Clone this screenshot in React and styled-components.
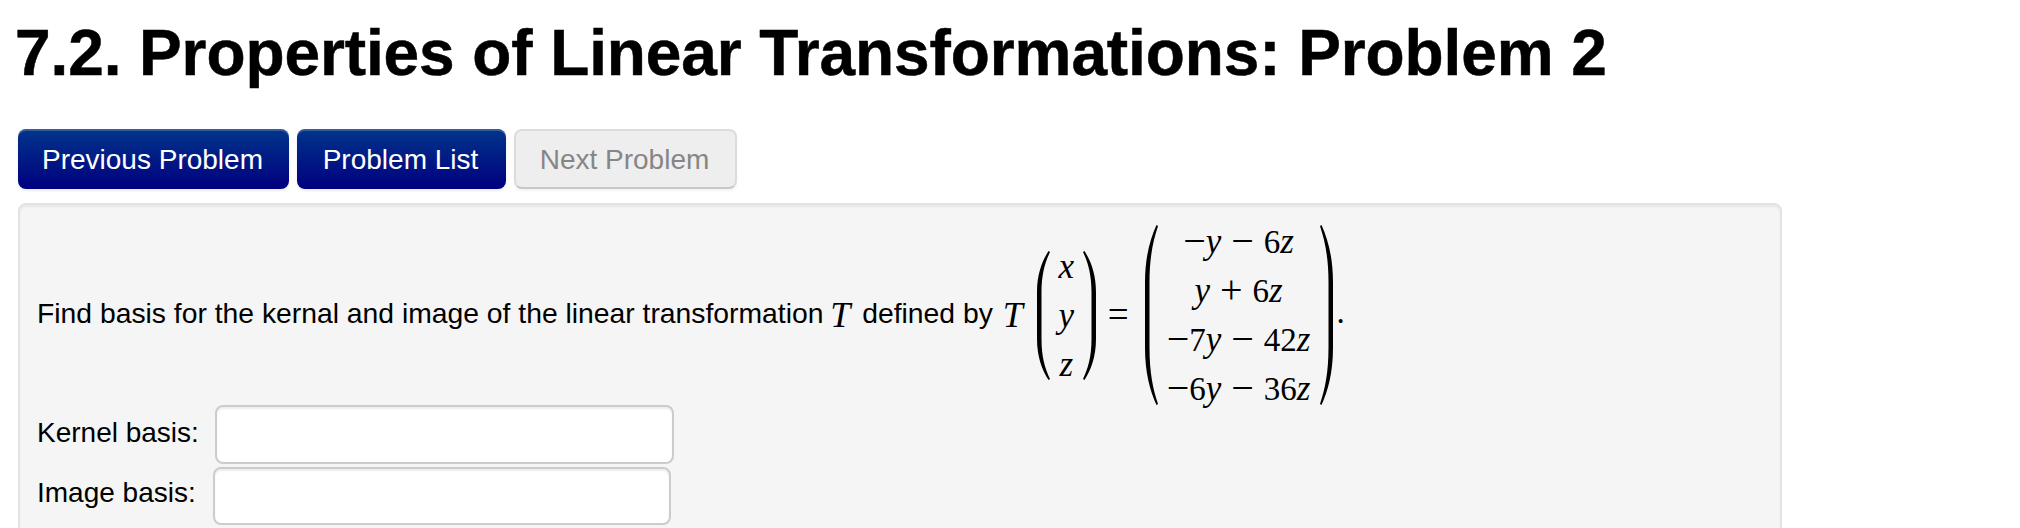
import React from 'react';
import styled, { createGlobalStyle } from 'styled-components';

const Global = createGlobalStyle`
  html, body {
    margin: 0;
    height: 528px;
    overflow: hidden;
    background: #fff;
    font-family: "Liberation Sans", Arial, sans-serif;
    color: #000;
  }
`;

const Page = styled.div`
  padding: 0 18px;
  width: 1764px;
`;

const Title = styled.h1`
  margin: 0 0 0 -3px;
  padding-top: 19px;
  height: 129px;
  box-sizing: border-box;
  font-size: 64px;
  line-height: 68px;
  letter-spacing: -0.1px;
  font-weight: bold;
  white-space: nowrap;
  -webkit-text-stroke: 0.5px #000;
`;

const Nav = styled.nav`
  display: flex;
  gap: 8px;
  height: 60px;
  margin-bottom: 14px;
`;

const NavButton = styled.a`
  box-sizing: border-box;
  width: ${p => p.$width}px;
  display: flex;
  align-items: center;
  justify-content: center;
  padding: 2px 2px 0 0;
  border-radius: 8px;
  font-size: 28px;
  background: ${p => p.$disabled ? '#eeeeee' : 'linear-gradient(#00358a, #00007f)'};
  color: ${p => p.$disabled ? '#868686' : '#fff'};
  border: ${p => p.$disabled ? '2px solid #dcdcdc' : '0'};
  border-bottom-color: ${p => p.$disabled ? '#c8c8c8' : 'transparent'};
  box-shadow: ${p => p.$disabled
    ? '0 2px 3px rgba(0,0,0,0.05)'
    : 'inset 0 2px 0 rgba(255,255,255,0.2), 0 2px 3px rgba(0,0,0,0.08)'};
`;

const Well = styled.section`
  box-sizing: border-box;
  height: 420px;
  padding: 20px 17px;
  background: #f5f5f5;
  border: 2px solid #e3e3e3;
  border-radius: 8px;
  box-shadow: inset 0 2px 2px rgba(0,0,0,0.05);
`;

const Problem = styled.div`
  display: flex;
  align-items: center;
  height: 180px;
  font-size: 28.3px;
  white-space: pre;
`;

const Sentence = styled.span`
  padding-bottom: 4px;
`;

const MathFont = styled.span`
  font-family: "Liberation Serif", "Times New Roman", serif;
  font-size: 33px;
`;

const MathVar = styled.i`
  font-family: "Liberation Serif", "Times New Roman", serif;
  font-size: 35px;
  font-style: italic;
`;

const Transform = styled(MathVar)`
  font-size: 36px;
  padding-bottom: 1px;
  margin: ${p => p.$margin};
`;

// the TeX minus and plus are wider than the Liberation ones
const Sign = styled.span`
  font-size: 40px;
  line-height: 1;
  vertical-align: -1px;
`;

const Operator = styled(Sign)`
  margin: 0 10px;
`;

const Matrix = styled(MathFont)`
  display: inline-flex;
  align-items: center;
  margin: ${p => p.$margin || 0};
`;

const Cells = styled.span`
  display: grid;
  width: ${p => p.$width}px;
  grid-auto-rows: 49px;
  line-height: 49px;
  justify-items: center;
`;

const Equals = styled(MathFont)`
  font-size: 37px;
  margin: 0 16px 0 12px;
  padding-bottom: 2px;
`;

const Stop = styled(MathFont)`
  margin-left: 4px;
  padding-bottom: 6px;
`;

const Field = styled.div`
  display: flex;
  align-items: center;
  gap: ${p => p.$gap}px;
  height: 59px;
  margin-bottom: 2px;
  font-size: 28px;
`;

const FieldLabel = styled.span`
  padding-bottom: ${p => p.$lift}px;
`;

const Input = styled.input`
  box-sizing: border-box;
  width: ${p => p.$width}px;
  height: ${p => p.$height}px;
  background: #fff;
  border: 2px solid #cccccc;
  border-radius: 8px;
  box-shadow: inset 0 2px 2px rgba(0,0,0,0.07);
  outline: none;
`;

const Paren = ({ height, flip }) => {
  const h = height;
  const d = `M11.5 0 C5 ${h * 0.08} 0 ${h * 0.18} 0 ${h * 0.32} L0 ${h * 0.68} C0 ${h * 0.82} 5 ${h * 0.92} 11.5 ${h}
    L13 ${h - 1} C8 ${h * 0.91} 4.5 ${h * 0.82} 4.5 ${h * 0.68} L4.5 ${h * 0.32} C4.5 ${h * 0.18} 8 ${h * 0.09} 13 1 Z`;
  return (
    <svg width="13" height={h} viewBox={`0 0 13 ${h}`} style={flip ? { transform: 'scaleX(-1)' } : undefined}>
      <path d={d} fill="#000" />
    </svg>
  );
};

export default function App() {
  return (
    <>
      <Global />
      <Page>
        <Title>7.2. Properties of Linear Transformations: Problem 2</Title>
        <Nav>
          <NavButton $width={271}>Previous Problem</NavButton>
          <NavButton $width={209}>Problem List</NavButton>
          <NavButton $width={223} $disabled>Next Problem</NavButton>
        </Nav>
        <Well>
          <Problem>
            <Sentence>Find basis for the kernal and image of the linear transformation </Sentence>
            <Transform $margin="0 4px 0 -1px">T</Transform>
            <Sentence> defined by </Sentence>
            <Transform $margin="0 0 0 2px">T</Transform>
            <Matrix $margin="0 0 0 14px">
              <Paren height={129} />
              <Cells $width={33}>
                <MathVar>x</MathVar>
                <MathVar>y</MathVar>
                <MathVar>z</MathVar>
              </Cells>
              <Paren height={129} flip />
            </Matrix>
            <Equals>=</Equals>
            <Matrix>
              <Paren height={180} />
              <Cells $width={162}>
                <span><Sign>−</Sign><MathVar>y</MathVar><Operator>−</Operator>6<MathVar>z</MathVar></span>
                <span><MathVar>y</MathVar><Operator>+</Operator>6<MathVar>z</MathVar></span>
                <span><Sign>−</Sign>7<MathVar>y</MathVar><Operator>−</Operator>42<MathVar>z</MathVar></span>
                <span><Sign>−</Sign>6<MathVar>y</MathVar><Operator>−</Operator>36<MathVar>z</MathVar></span>
              </Cells>
              <Paren height={180} flip />
            </Matrix>
            <Stop>.</Stop>
          </Problem>
          <Field $gap={16}>
            <FieldLabel $lift={3}>Kernel basis:</FieldLabel>
            <Input $width={459} $height={59} />
          </Field>
          <Field $gap={17}>
            <FieldLabel $lift={6}>Image basis:</FieldLabel>
            <Input $width={458} $height={58} />
          </Field>
        </Well>
      </Page>
    </>
  );
}
